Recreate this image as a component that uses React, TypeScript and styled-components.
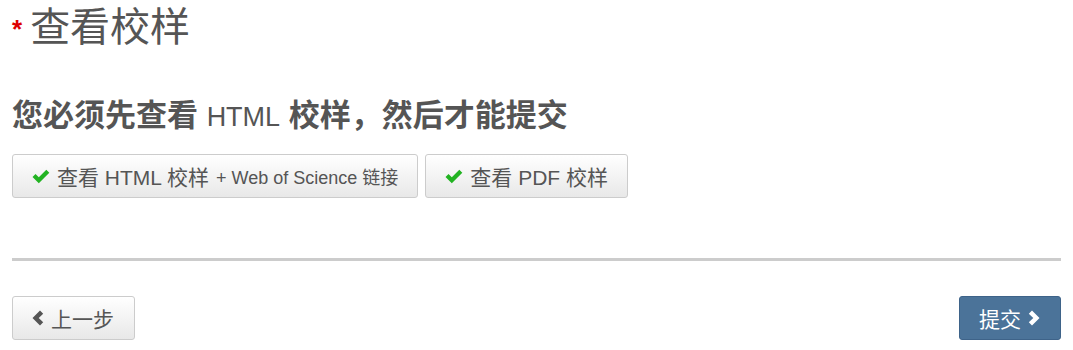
import styled, {createGlobalStyle} from "styled-components"

const GlobalStyle = createGlobalStyle`
  html, body {
    margin: 0;
    padding: 0;
    background: #fff;
  }
  body {
    font-family: "Liberation Sans", "Noto Sans CJK SC", sans-serif;
    color: #555;
  }
`

const Page = styled.div`
  padding: 0 12px;
  width: 1049px;
`

const Title = styled.h1`
  margin: 0;
  padding-top: 2px;
  display: flex;
  align-items: baseline;
  gap: 8px;
  font-size: 40px;
  font-weight: normal;
  line-height: 50px;
  color: #555;
`

const Required = styled.span`
  color: #d00;
  font-size: 26px;
  font-weight: bold;
  position: relative;
  top: -3px;
`

const Notice = styled.h2`
  margin: 39px 0 0;
  font-size: 31px;
  font-weight: bold;
  line-height: 40px;
  color: #555;
`

const Light = styled.span`
  font-weight: normal;
  font-size: 27px;
`

const ButtonRow = styled.div`
  display: flex;
  gap: 7px;
  margin-top: 17px;
`

const Button = styled.button<{$primary?: boolean}>`
  display: inline-flex;
  align-items: center;
  gap: 7px;
  height: 44px;
  padding: 0 19px;
  border-radius: 3px;
  border: 1px solid ${p => (p.$primary ? "#3e6389" : "#ccc")};
  background: ${p => (p.$primary ? "#4b7399" : "linear-gradient(#fff, #e8e8e8)")};
  color: ${p => (p.$primary ? "#fff" : "#555")};
  font-family: inherit;
  font-size: 21px;
  white-space: nowrap;
  cursor: pointer;
`

const Small = styled.span`
  font-size: 18px;
`

const Divider = styled.hr`
  margin: 60px 0 0;
  border: 0;
  height: 3px;
  background: #ccc;
`

const Footer = styled.div`
  display: flex;
  justify-content: space-between;
  margin-top: 35px;
`

const NavButton = styled(Button)`
  padding: 0 20px 0 19px;
  gap: 7px;
`

function Check() {
  return (
    <svg width="18" height="15" viewBox="0 0 18 15">
      <path d="M0.5 8 L3.5 5 L6.8 8.3 L14.3 0.8 L17.3 3.8 L6.8 14.3 Z" fill="#22b322" />
    </svg>
  )
}

function Chevron({dir, color}: {dir: "left" | "right"; color: string}) {
  const d =
    dir === "left"
      ? "M8 0.5 L11.2 3.7 L6.7 8 L11.2 12.3 L8 15.5 L0.5 8 Z"
      : "M4 0.5 L0.8 3.7 L5.3 8 L0.8 12.3 L4 15.5 L11.5 8 Z"
  return (
    <svg width="12" height="16" viewBox="0 0 12 16">
      <path d={d} fill={color} />
    </svg>
  )
}

export default function App() {
  return (
    <Page>
      <GlobalStyle />
      <Title>
        <Required>*</Required>
        查看校样
      </Title>
      <Notice>
        您必须先查看 <Light>HTML</Light> 校样，然后才能提交
      </Notice>
      <ButtonRow>
        <Button type="button">
          <Check />
          查看 HTML 校样 <Small>+ Web of Science 链接</Small>
        </Button>
        <Button type="button">
          <Check />
          查看 PDF 校样
        </Button>
      </ButtonRow>
      <Divider />
      <Footer>
        <NavButton type="button">
          <Chevron dir="left" color="#555" />
          上一步
        </NavButton>
        <NavButton type="button" $primary>
          提交
          <Chevron dir="right" color="#fff" />
        </NavButton>
      </Footer>
    </Page>
  )
}
